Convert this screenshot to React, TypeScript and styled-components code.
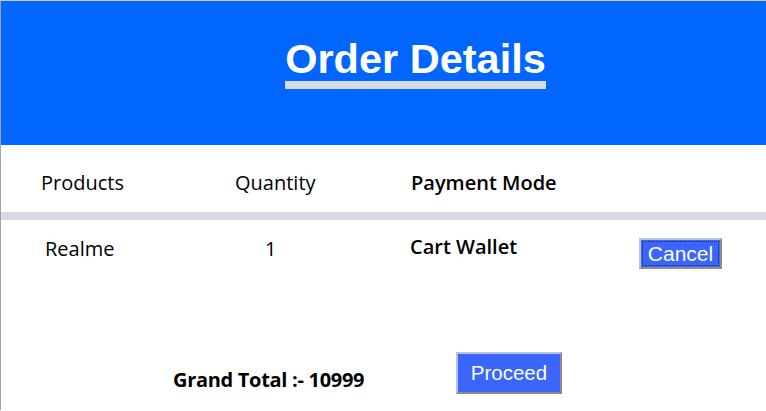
import React from 'react';
import styled, { createGlobalStyle } from 'styled-components';

const GlobalStyle = createGlobalStyle`
    html, body {
        margin: 0;
        padding: 0;
        background: #ffffff;
    }
    body {
        font-family: "Open Sans", "Noto Sans", sans-serif;
        color: #000000;
    }
`

const Page = styled.div`
    min-height: 410px;
    border-top: 1px solid #c9ccd4;
    border-left: 1px solid #a3a3a3;
    box-sizing: border-box;
`

const Banner = styled.header`
    height: 144px;
    background: #0066ff;
    display: flex;
    justify-content: center;
    align-items: flex-start;
    padding: 35px 0 0 64px;
    box-sizing: border-box;
`

const Title = styled.h1`
    display: inline-block;
    margin: 0;
    font-family: "Liberation Sans", Arial, sans-serif;
    font-size: 41.5px;
    font-weight: 700;
    line-height: 45px;
    color: #ffffff;
    border-bottom: 8px solid #d8d9e1;
`

const Row = styled.div<{ $cols: string; $left: number }>`
    display: grid;
    grid-template-columns: ${p => p.$cols};
    align-items: start;
    padding-left: ${p => p.$left}px;
`

const HeadRow = styled(Row)`
    margin-top: 24px;
`

const Divider = styled.div`
    height: 8px;
    margin-top: 15px;
    background: #d6d9e0;
`

const BodyRow = styled(Row)`
    margin-top: 15px;
`

const Cell = styled.span<{ $weight?: number; $lift?: number; $tight?: boolean }>`
    font-size: 20px;
    line-height: 28px;
    font-weight: ${p => p.$weight ?? 500};
    letter-spacing: ${p => (p.$tight ? '-0.3px' : 'normal')};
    margin-top: ${p => -(p.$lift ?? 0)}px;
    white-space: nowrap;
`

const Footer = styled(Row)`
    margin-top: 83px;
    align-items: end;
`

const Button = styled.button<{ $w: number; $h: number; $size: number; $focus?: boolean }>`
    width: ${p => p.$w}px;
    height: ${p => p.$h}px;
    padding: 0;
    margin-top: ${p => (p.$focus ? 3 : 0)}px;
    background: #3a66ff;
    color: #ffffff;
    font-family: "Liberation Sans", Arial, sans-serif;
    font-size: ${p => p.$size}px;
    line-height: 1;
    border: 2px solid;
    border-color: #b9c3de #8c8c8c #8c8c8c #b9c3de;
    outline: ${p => (p.$focus ? '1px dotted #2a2a40' : 'none')};
    outline-offset: -4px;
    cursor: pointer;
`

const App: React.FC = () => {
    return (
        <Page>
            <GlobalStyle />
            <Banner>
                <Title>Order Details</Title>
            </Banner>
            <HeadRow $cols="194px 176px auto" $left={40}>
                <Cell>Products</Cell>
                <Cell>Quantity</Cell>
                <Cell $weight={600}>Payment Mode</Cell>
            </HeadRow>
            <Divider />
            <BodyRow $cols="220px 145px 229px auto" $left={44}>
                <Cell>Realme</Cell>
                <Cell>1</Cell>
                <Cell $weight={600} $lift={2}>Cart Wallet</Cell>
                <Button $w={83} $h={31} $size={21} $focus>Cancel</Button>
            </BodyRow>
            <Footer $cols="283px auto" $left={172}>
                <Cell $weight={700} $tight>Grand Total :- 10999</Cell>
                <Button $w={106} $h={42} $size={20.5}>Proceed</Button>
            </Footer>
        </Page>
    )
}

export default App;
